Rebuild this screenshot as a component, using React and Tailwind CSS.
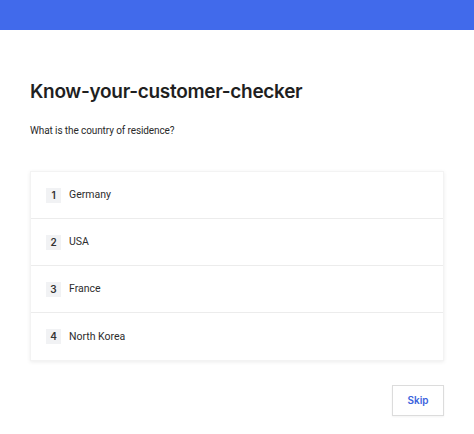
const options = ['Germany', 'USA', 'France', 'North Korea'];

const App = () => {
    return (
        <div className="min-h-screen bg-white" style={{ fontFamily: 'Inter, "Liberation Sans", sans-serif' }}>
            <div className="h-[30px] bg-[#416aeb]" />
            <main className="px-[30px]">
                <h1 className="mt-[50px] text-[19px] leading-[24px] font-semibold text-[#1f1f1f] tracking-[-0.3px]">Know-your-customer-checker</h1>
                <p className="mt-[20px] text-[10px] leading-[14px] text-[#2a2a2a] tracking-[-0.1px] font-['Roboto',sans-serif]">What is the country of residence?</p>

                <div className="mt-[33px] bg-white shadow-[0_1px_4px_rgba(0,0,0,0.08)] border border-[#f3f3f3]">
                    {options.map((opt, i) => (
                        <div
                            key={opt}
                            className={`h-[47px] flex items-center px-[15px] gap-[8px] ${i < options.length - 1 ? 'border-b border-[#ececec]' : ''}`}
                        >
                            <span className="w-[15px] h-[15px] bg-[#f1f2f4] text-[10px] font-semibold text-[#333] flex items-center justify-center">
                                {i + 1}
                            </span>
                            <span className="text-[10.5px] text-[#2d2d2d] font-['Roboto',sans-serif]">{opt}</span>
                        </div>
                    ))}
                </div>

                <div className="flex justify-end mt-[24px]">
                    <button className="w-[52px] h-[31px] border border-[#dcdcdc] bg-white text-[10px] font-semibold text-[#3b63dd] shadow-[0_1px_2px_rgba(0,0,0,0.05)]">
                        Skip
                    </button>
                </div>
            </main>
        </div>
    );
};

export default App;
